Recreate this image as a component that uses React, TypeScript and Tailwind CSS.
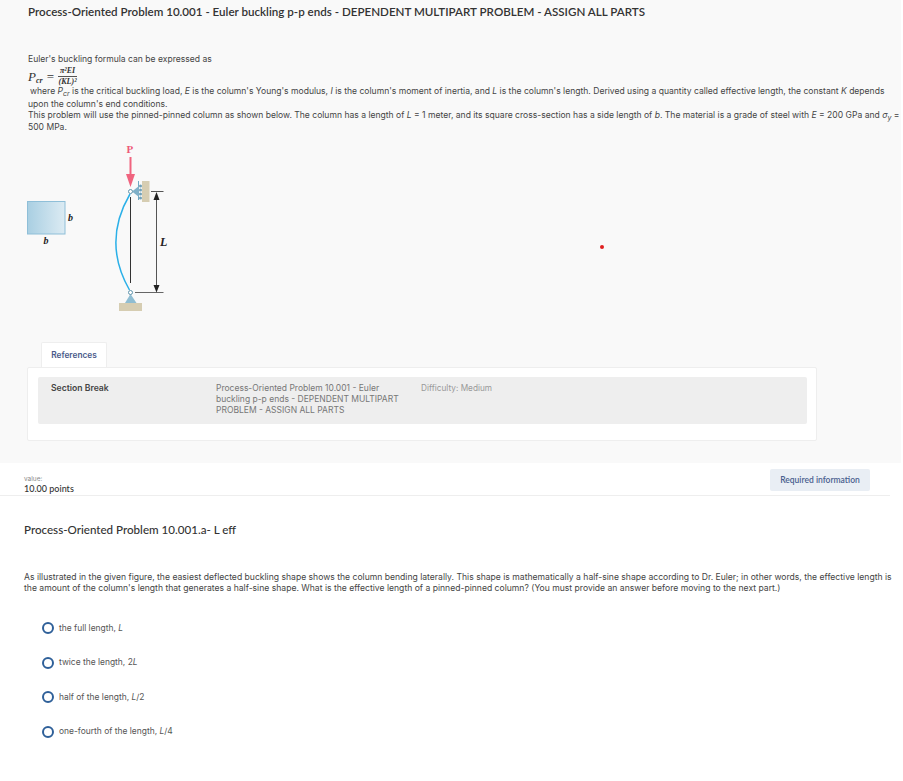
import { useState } from "react";

const options = [
  { label: "the full length, ", math: "L", tail: "" },
  { label: "twice the length, 2", math: "L", tail: "" },
  { label: "half of the length, ", math: "L", tail: "/2" },
  { label: "one-fourth of the length, ", math: "L", tail: "/4" },
];

function Column() {
  return (
    <svg width="190" height="180" viewBox="0 0 190 180" className="block">
      <defs>
        <linearGradient id="sq" x1="0" x2="1" y1="0" y2="0">
          <stop offset="0" stopColor="#a9cfe2" />
          <stop offset="1" stopColor="#dcebf3" />
        </linearGradient>
      </defs>
      <rect x="7.5" y="61.5" width="37.500" height="32.500" fill="url(#sq)" stroke="#8fbfd8" />
      <text x="48" y="81" fontFamily="Liberation Serif" fontStyle="italic" fontWeight="700" fontSize="10" fill="#222">b</text>
      <text x="23.500" y="104" fontFamily="Liberation Serif" fontStyle="italic" fontWeight="700" fontSize="10" fill="#222">b</text>

      <text x="106.500" y="13" fontFamily="Liberation Serif" fontWeight="700" fontSize="11" fill="#ee5a7a">P</text>
      <path d="M110.500 17V36" stroke="#f0647f" strokeWidth="2" />
      <path d="M106 34L115 34L110.500 47Z" fill="#f0647f" />

      <rect x="122" y="41" width="7.500" height="21" fill="#d6cdb2" />
      <path d="M118.500 41V60" stroke="#6fa8c4" strokeWidth="1" />
      <path d="M112 51.500L119 46V57Z" fill="#7fb0c8" />
      <circle cx="120.500" cy="46" r="1.500" fill="#6fa0b8" />
      <circle cx="120.500" cy="50" r="1.500" fill="#6fa0b8" />
      <circle cx="120.500" cy="54" r="1.500" fill="#6fa0b8" />
      <circle cx="120.500" cy="58" r="1.500" fill="#6fa0b8" />

      <path d="M110 54Q82 102 109.500 150" stroke="#2bb0e8" strokeWidth="1.500" fill="none" />
      <path d="M110.500 57V143" stroke="#333" strokeWidth="1" />

      <path d="M115 152.500H143.500" stroke="#666" strokeWidth="1" />
      <path d="M131 51.500H143.500" stroke="#555" strokeWidth="1" />
      <path d="M136.500 56V148" stroke="#555" strokeWidth="1" />
      <path d="M136.500 52L133.500 60H139.500Z M136.500 152.500L133.500 145H139.500Z" fill="#222" />
      <text x="140" y="106" fontFamily="Liberation Serif" fontStyle="italic" fontWeight="700" fontSize="12" fill="#222">L</text>

      <path d="M110.500 154L105 163H116.500Z" fill="#8fbdd2" />
      <rect x="99" y="163" width="23" height="8" fill="#d6cdb2" />
      <circle cx="110.500" cy="51.500" r="2" fill="#fff" stroke="#5f93ab" />
      <circle cx="110.500" cy="152.500" r="2" fill="#fff" stroke="#5f93ab" />
    </svg>
  );
}

function Formula() {
  return (
    <div className="flex h-[23px] items-center gap-[4px] font-['Liberation_Serif'] text-[#333]">
      <span className="text-[13px] italic">
        P<sub className="text-[8px] font-bold">cr</sub>
      </span>
      <span className="text-[13px]">=</span>
      <span className="flex flex-col items-center text-[8px] font-bold italic leading-[10px]">
        <span className="border-b border-[#555] px-[2px]">π²EI</span>
        <span>(KL)²</span>
      </span>
    </div>
  );
}

export default function App() {
  const [answer, setAnswer] = useState<number | null>(null);

  return (
    <div className="relative min-h-[781px] bg-white font-['Inter',sans-serif] text-[#333]">
      <div className="mr-[2px] h-[463px] bg-[#f9f9f9]">
        <div className="px-[28px] pt-[4px]">
          <h1 className="font-['Lato',sans-serif] text-[11.600px] font-semibold leading-[15px] text-[#333]">
            Process-Oriented Problem 10.001 - Euler buckling p-p ends - DEPENDENT MULTIPART PROBLEM - ASSIGN ALL PARTS
          </h1>

          <div className="mt-[34px] text-[8.570px] leading-[13px] text-[#444]">
            <p className="h-[12px] leading-[12px]">Euler's buckling formula can be expressed as</p>
            <Formula />
            <p className="-mt-[3px] ml-[2px] h-[13px] whitespace-nowrap">
              where <i>P<sub className="text-[7px]">cr</sub></i> is the critical buckling load, <i>E</i> is the column's Young's modulus, <i>I</i> is the column's moment of inertia, and <i>L</i> is the column's length. Derived using a quantity called effective length, the constant <i>K</i> depends
            </p>
            <p className="h-[13px]">upon the column's end conditions.</p>
            <p className="-mt-[1px] h-[11px] whitespace-nowrap leading-[11px]">
              This problem will use the pinned-pinned column as shown below. The column has a length of <i>L</i> = 1 meter, and its square cross-section has a side length of <i>b</i>. The material is a grade of steel with <i>E</i> = 200 GPa and <i>σ<sub className="text-[7px]">y</sub></i> =
            </p>
            <p className="h-[13px]">500 MPa.</p>
          </div>
        </div>

        <div className="ml-[20px] mt-[6px]">
          <Column />
        </div>

        <div className="ml-[41px] mt-[22px] flex h-[25px] w-[66px] items-center justify-center rounded-t-[2px] border border-b-0 border-[#eeeeee] bg-white text-[8.300px] font-semibold text-[#4a5a8a]">
          References
        </div>
        <div className="ml-[27px] h-[74px] w-[790px] rounded-[2px] border border-[#eeeeee] bg-white pl-[10px] pr-[9px] pt-[9px]">
          <div className="grid h-[47px] grid-cols-[165px_205px_1fr] rounded-[2px] bg-[#eeeeee] pl-[13px] pt-[6px] text-[8.500px] leading-[11px]">
            <span className="text-[8.650px] font-semibold text-[#444]">Section Break</span>
            <span className="text-[#777]">
              Process-Oriented Problem 10.001 - Euler
              <br />
              buckling p-p ends - DEPENDENT MULTIPART
              <br />
              PROBLEM - ASSIGN ALL PARTS
            </span>
            <span className="text-[8.250px] text-[#999]">Difficulty: Medium</span>
          </div>
        </div>
      </div>

      <div className="mr-[13px] flex h-[33px] items-start justify-between border-b border-[#eeeeee] pl-[24px] pr-[20px]">
        <div className="pt-[12px]">
          <div className="text-[6.500px] leading-[8px] text-[#888]">value:</div>
          <div className="font-['Lato',sans-serif] text-[9px] font-medium leading-[11px] text-[#333]">10.00 points</div>
        </div>
        <button className="mt-[6px] h-[22px] w-[100px] rounded-[2px] bg-[#e9eef4] font-['Lato',sans-serif] text-[8.500px] font-semibold text-[#4a5f8f]">
          Required information
        </button>
      </div>

      <h2 className="ml-[24px] mt-[26px] font-['Lato',sans-serif] text-[11.600px] font-medium leading-[16px] text-[#333]">
        Process-Oriented Problem 10.001.a- L eff
      </h2>

      <p className="mt-[34px] whitespace-nowrap pl-[24px] text-[8.600px] leading-[11px] text-[#444]">
        As illustrated in the given figure, the easiest deflected buckling shape shows the column bending laterally. This shape is mathematically a half-sine shape according to Dr. Euler; in other words, the effective length is
        <br />
        the amount of the column's length that generates a half-sine shape. What is the effective length of a pinned-pinned column? (You must provide an answer before moving to the next part.)
      </p>

      <div className="ml-[42px] mt-[28px] flex flex-col gap-[22.500px]">
        {options.map((o, i) => (
          <label key={o.label} className="flex h-[12px] items-center gap-[5px] text-[8.450px] text-[#555]">
            <input
              type="radio"
              name="answer"
              checked={answer === i}
              onChange={() => setAnswer(i)}
              className="h-[12px] w-[12px] appearance-none rounded-full border-2 border-[#2f6099] bg-white checked:bg-[#2f6099]"
            />
            <span>
              {o.label}
              <i>{o.math}</i>
              {o.tail}
            </span>
          </label>
        ))}
      </div>

      <div className="absolute left-[600px] top-[245px] h-[4px] w-[4px] rounded-full bg-[#e02020]" />
    </div>
  );
}
